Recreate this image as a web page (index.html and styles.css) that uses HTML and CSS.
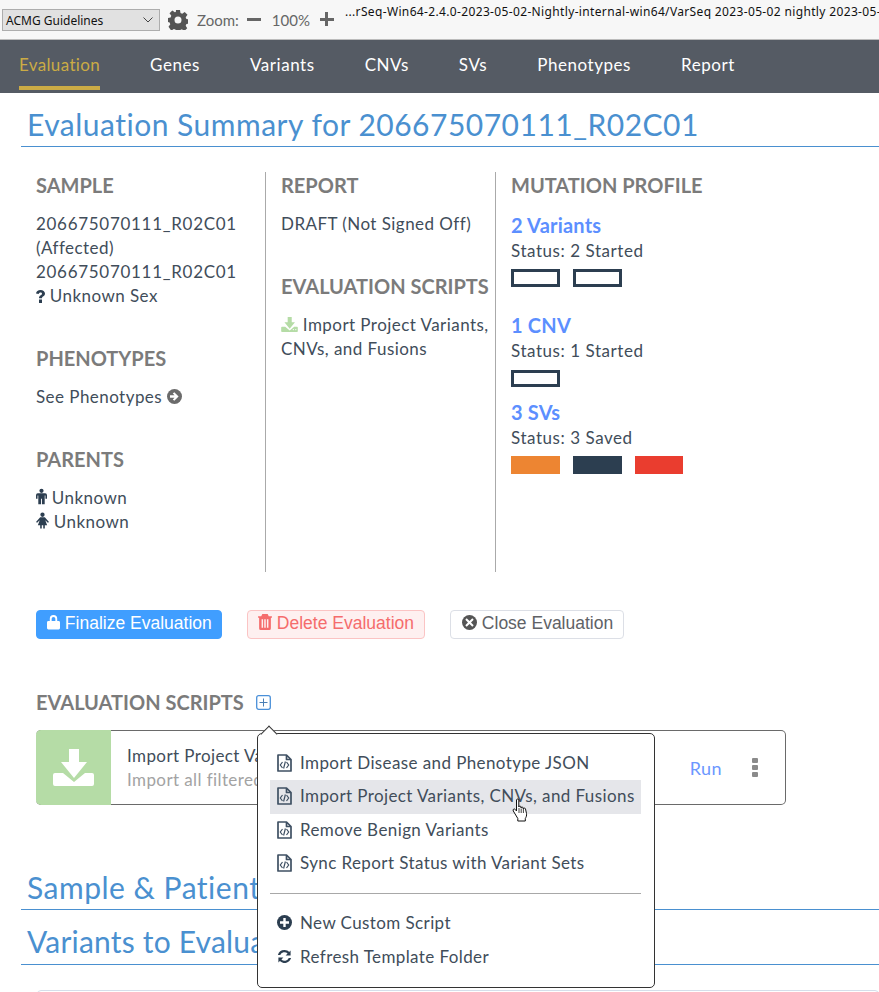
FILE: index.html
```html
<!DOCTYPE html>
<html lang="en">
<head>
<meta charset="utf-8">
<title>Evaluation Summary</title>
<link rel="stylesheet" href="styles.css">
</head>
<body>
<svg class="sprites" width="0" height="0" aria-hidden="true">
  <symbol id="file-code" viewBox="0 0 15 18">
    <path d="M1 1h8.500L14 5.500V17H1z M9.500 1v4.500H14" fill="none" stroke="currentColor" stroke-width="1.700" stroke-linejoin="round"/>
    <path d="M5.500 8 3.300 11l2.200 3M9.500 8l2.200 3-2.200 3M8.400 7.500 6.600 14.500" fill="none" stroke="currentColor" stroke-width="1.200"/>
  </symbol>
  <symbol id="download" viewBox="0 0 41 37">
    <path d="M16 0h10v13h8L21 29 8 13h8z" fill="currentColor"/>
    <path d="M0 26a2 2 0 0 1 2-2h8l11 9 11-9h7a2 2 0 0 1 2 2v9a2 2 0 0 1-2 2H2a2 2 0 0 1-2-2z" fill="currentColor"/>
    <circle cx="30" cy="31" r="1.500" class="dl-dot"/><circle cx="36" cy="31" r="1.500" class="dl-dot"/>
  </symbol>
</svg>

<header class="toolbar">
  <div class="select"><span>ACMG Guidelines</span>
    <svg class="chevron" width="10" height="6" viewBox="0 0 10 6"><path d="M.5.500 5 5 9.500.500" fill="none" stroke="#444" stroke-width="1"/></svg>
  </div>
  <svg class="gear" width="20" height="20" viewBox="0 0 20 20">
    <path fill="#555" fill-rule="evenodd" d="M8 0h4l.5 3 1.700.7L16.700 2l2.800 2.800-1.800 2.500.7 1.700 2.600.5v4l-2.600.5-.7 1.700 1.500 2.500-2.800 2.800-2.500-1.700-1.700.7-.5 2.500H8l-.5-2.900-1.700-.7-2.500 1.800L.5 16.700l1.800-2.500-.7-1.700L0 12V8l2.600-.5.700-1.700L1.500 3.300 4.300.5 6.800 2.300l1-.4zM10 6.500a3.500 3.500 0 1 0 0 7 3.500 3.500 0 0 0 0-7z"/>
  </svg>
  <span class="zoom-label">Zoom:</span>
  <span class="zoom-btn minus"></span>
  <span class="zoom-value">100%</span>
  <span class="zoom-btn plus"></span>
  <span class="path">...rSeq-Win64-2.4.0-2023-05-02-Nightly-internal-win64/VarSeq 2023-05-02 nightly 2023-05-0</span>
</header>

<nav class="nav">
  <a class="nav-item active">Evaluation</a>
  <a class="nav-item">Genes</a>
  <a class="nav-item">Variants</a>
  <a class="nav-item">CNVs</a>
  <a class="nav-item">SVs</a>
  <a class="nav-item">Phenotypes</a>
  <a class="nav-item">Report</a>
</nav>

<main class="main">
  <h1 class="page-title first">Evaluation Summary for 206675070111_R02C01</h1>

  <section class="summary">
    <div class="col col-a">
      <h3 class="label">SAMPLE</h3>
      <p class="text"><span class="id">206675070111_R02C01</span><br>(Affected)<br><span class="id">206675070111_R02C01</span><br>
        <svg class="ico" width="9" height="13" viewBox="0 0 9 13"><path fill="#2c3e50" d="M0 3.500C.3 1.300 2 0 4.500 0 7 0 9 1.500 9 3.600c0 2.900-3 2.700-3 4.700H3c0-3.300 3-3 3-4.600 0-.800-.7-1.200-1.500-1.200-.9 0-1.500.5-1.800 1.500zM3 9.500h3V13H3z"/></svg> Unknown Sex</p>
      <h3 class="label next">PHENOTYPES</h3>
      <p class="text">See Phenotypes
        <svg class="ico" width="15" height="15" viewBox="0 0 15 15"><circle cx="7.500" cy="7.500" r="7.500" fill="#6b6b6b"/><path d="M3 6.300h4.500L5.800 4.600 7.300 3.200l4.300 4.300-4.300 4.300-1.500-1.400 1.700-1.700H3z" fill="#fff"/></svg></p>
      <h3 class="label next">PARENTS</h3>
      <p class="text">
        <svg class="ico" width="11" height="17" viewBox="0 0 12 17"><circle cx="6" cy="2.300" r="2.300" fill="#2c3e50"/><path fill="#2c3e50" d="M2 5h8a2 2 0 0 1 2 2v4h-1.700V7.500H9.500V17H6.500v-6h-1v6H2.500V7.500h-.8V11H0V7a2 2 0 0 1 2-2z"/></svg> Unknown<br>
        <svg class="ico" width="13" height="17" viewBox="0 0 14 17"><circle cx="7" cy="2.300" r="2.300" fill="#2c3e50"/><path fill="#2c3e50" d="M4.500 5h5L14 10l-1.200 1L10 8.200l2 5.300H9.500V17h-1.700v-3.500H6.200V17H4.500v-3.500H2l2-5.300L1.200 11 0 10z"/></svg> Unknown</p>
    </div>
    <div class="col col-b">
      <h3 class="label">REPORT</h3>
      <p class="text">DRAFT (Not Signed Off)</p>
      <h3 class="label next">EVALUATION SCRIPTS</h3>
      <p class="text"><svg class="ico dl-small" width="17" height="15"><use href="#download"/></svg> Import Project Variants, CNVs, and Fusions</p>
    </div>
    <div class="col col-c">
      <h3 class="label">MUTATION PROFILE</h3>
      <a class="count top">2 Variants</a>
      <p class="text status">Status: 2 Started</p>
      <div class="bars first"><i class="bar open"></i><i class="bar open"></i></div>
      <a class="count gap-lg">1 CNV</a>
      <p class="text status">Status: 1 Started</p>
      <div class="bars short"><i class="bar open"></i></div>
      <a class="count gap-sm">3 SVs</a>
      <p class="text status">Status: 3 Saved</p>
      <div class="bars sv"><i class="bar orange"></i><i class="bar navy"></i><i class="bar red"></i></div>
    </div>
  </section>

  <div class="actions">
    <button class="btn primary">
      <svg class="ico" width="13" height="16" viewBox="0 0 14 16"><path fill="#fff" fill-rule="evenodd" d="M3 7V4.500a4 4 0 0 1 8 0V7h1.500a1.500 1.500 0 0 1 1.500 1.500v6a1.500 1.500 0 0 1-1.500 1.500h-11A1.500 1.500 0 0 1 0 14.500v-6A1.500 1.500 0 0 1 1.500 7zm2 0h4V4.500a2 2 0 0 0-4 0z"/></svg>
      Finalize Evaluation</button>
    <button class="btn danger">
      <svg class="ico" width="14" height="16" viewBox="0 0 13 15"><path fill="#f56c6c" fill-rule="evenodd" d="M4 0h5l1 2h3v1.500h-1V13.500A1.500 1.500 0 0 1 10.500 15h-8A1.500 1.500 0 0 1 1 13.500V3.500H0V2h3zM3.300 5v8h1.400V5zm2.500 0v8h1.400V5zm2.500 0v8h1.400V5z"/></svg>
      Delete Evaluation</button>
    <button class="btn plain">
      <svg class="ico" width="15" height="15" viewBox="0 0 15 15"><circle cx="7.500" cy="7.500" r="7.500" fill="#555"/><path d="M4.700 3.300 7.500 6l2.800-2.700 1.400 1.400L9 7.500l2.700 2.800-1.400 1.400L7.500 9l-2.800 2.700-1.400-1.400L6 7.500 3.300 4.700z" fill="#fff"/></svg>
      Close Evaluation</button>
  </div>

  <h3 class="label scripts-head">EVALUATION SCRIPTS
    <svg class="add" width="15" height="15" viewBox="0 0 15 15"><rect x=".7" y=".7" width="13.600" height="13.600" rx="2" fill="none" stroke="#4a90d9" stroke-width="1.300"/><path d="M7.500 3.500v8M3.500 7.500h8" stroke="#4a7fb5" stroke-width="1"/></svg>
  </h3>

  <div class="script-card">
    <div class="script-thumb"><svg class="dl-large" width="41" height="37"><use href="#download"/></svg></div>
    <div class="script-body">
      <div class="script-name">Import Project Variants</div>
      <div class="script-desc">Import all filtered</div>
    </div>
    <a class="run">Run</a>
    <div class="kebab"><i></i><i></i><i></i></div>
  </div>

  <h1 class="page-title sample">Sample &amp; Patient Information</h1>
  <h1 class="page-title last">Variants to Evaluate</h1>
  <div class="next-card"></div>
</main>

<div class="menu">
  <div class="menu-item"><svg class="menu-ico file"><use href="#file-code"/></svg>Import Disease and Phenotype JSON</div>
  <div class="menu-item hover"><svg class="menu-ico file"><use href="#file-code"/></svg>Import Project Variants, CNVs, and Fusions</div>
  <div class="menu-item"><svg class="menu-ico file"><use href="#file-code"/></svg>Remove Benign Variants</div>
  <div class="menu-item"><svg class="menu-ico file"><use href="#file-code"/></svg>Sync Report Status with Variant Sets</div>
  <hr class="menu-sep">
  <div class="menu-item"><svg class="menu-ico" viewBox="0 0 15 15"><circle cx="7.500" cy="7.500" r="7.500" fill="#2c3e50"/><path d="M6.300 3h2.400v3.300H12v2.400H8.700V12H6.300V8.700H3V6.300h3.300z" fill="#fff"/></svg>New Custom Script</div>
  <div class="menu-item"><svg class="menu-ico" viewBox="0 0 15 15"><path fill="#2c3e50" d="M7.600 1c1.800 0 3.400.7 4.500 1.900L13.600 1.500V6.500H8.600l2-2A4.500 4.500 0 0 0 3.200 6H.9A6.800 6.800 0 0 1 7.600 1zM1.400 8.500h5l-2 2A4.500 4.500 0 0 0 11.800 9h2.300a6.800 6.800 0 0 1-11.200 3.100L1.400 13.500z"/></svg>Refresh Template Folder</div>
</div>

<svg class="cursor" width="17" height="25" viewBox="0 0 17 25">
  <path d="M4.500 2c0-1.300 2.300-1.300 2.300 0v7c0-1.200 2.200-1.200 2.200 0v1c0-1.200 2.200-1.200 2.200 0v1c0-1.200 2.300-1.200 2.300 0l1 4.500c.4 2-.3 3.500-1.200 5v2.500H5.800v-2.500L1.300 13c-1-1.500 1-2.800 2-1.500l1.200 1.500z" fill="#fff" stroke="#111" stroke-width="1" stroke-linejoin="round"/>
  <path d="M7 10v5M9.200 10.500V15M11.400 11v4" stroke="#111" stroke-width=".8"/>
</svg>
</body>
</html>
```

FILE: styles.css
```css
* { box-sizing: border-box; }
html, body { margin: 0; padding: 0; }
body {
  position: relative;
  width: 879px;
  height: 992px;
  overflow: hidden;
  background: #fff;
  font-family: Lato, "Noto Sans", sans-serif;
  color: #414d5a;
}
.sprites { position: absolute; }
.ico { vertical-align: -1px; }

/* Toolbar */
.toolbar {
  display: flex;
  align-items: flex-start;
  height: 40px;
  padding: 9px 0 0 2px;
  background: #f7f7f7;
  border-bottom: 1px solid #bcbcbc;
  white-space: nowrap;
  overflow: hidden;
}
.toolbar > * { flex: none; }
.select {
  display: flex;
  align-items: center;
  justify-content: space-between;
  width: 158px;
  height: 22px;
  padding: 0 6px 0 3px;
  background: #e1e1e1;
  border: 1px solid #adadad;
  font: 12px "Noto Sans", sans-serif;
  color: #111;
}
.gear { margin: 1px 0 0 8px; }
.zoom-label, .zoom-value {
  font: 15px/22px Lato, sans-serif;
  color: #666;
}
.zoom-label { margin-left: 9px; }
.zoom-value { margin-left: 11px; }
.zoom-btn { position: relative; width: 14px; height: 22px; }
.zoom-btn::before, .plus::after {
  content: "";
  position: absolute;
  background: #666;
}
.zoom-btn::before { left: 0; top: 8.500px; width: 14px; height: 3px; }
.plus::after { left: 5.500px; top: 3px; width: 3px; height: 14px; }
.minus { margin-left: 8px; }
.plus { margin-left: 10px; }
.path {
  margin: -7px 0 0 11px;
  font: 12px/20px "Noto Sans", sans-serif;
  letter-spacing: .35px;
  color: #111;
}

/* Nav */
.nav {
  display: flex;
  gap: 50px;
  height: 53px;
  padding-left: 19px;
  background: #555b64;
}
.nav-item {
  height: 50px;
  font-size: 17px;
  letter-spacing: .55px;
  line-height: 50px;
  color: #fff;
}
.nav-item.active {
  letter-spacing: .35px;
  color: #cbab45;
  border-bottom: 4px solid #cbab45;
}

/* Main */
.main { padding-left: 21px; }
.page-title {
  margin: 0;
  height: 55px;
  padding: 13px 0 0 6px;
  border-bottom: 1px solid #4a90d0;
  font-size: 30px;
  font-weight: 400;
  letter-spacing: .5px;
  line-height: 38px;
  color: #4a90d0;
  white-space: nowrap;
  overflow: hidden;
}
.page-title.first { height: 54px; padding-top: 12px; }
.page-title.sample { margin-top: 50px; }
.page-title.last { padding-top: 12px; letter-spacing: .2px; }

.summary {
  display: flex;
  height: 400px;
  margin-top: 25px;
}
.col { padding: 1px 0 0 15px; }
.col-a { width: 244px; }
.col-b { width: 230px; border-left: 1px solid #aaa; }
.col-c { flex: 1; border-left: 1px solid #aaa; }

.label {
  margin: 0;
  font-size: 20px;
  font-weight: 700;
  line-height: 24px;
  color: #7b7b7b;
  white-space: nowrap;
}
.label.next { margin-top: 38px; }
.text {
  margin: 15px 0 0;
  font-size: 17px;
  letter-spacing: .45px;
  line-height: 24px;
}
.id { letter-spacing: .7px; }
.count {
  display: block;
  font-size: 20px;
  font-weight: 700;
  line-height: 26px;
  letter-spacing: .2px;
  color: #5c8fff;
}
.count.top { margin-top: 15px; }
.count.gap-lg { margin-top: 25px; }
.count.gap-sm { margin-top: 12px; }
.text.status { margin-top: 1px; letter-spacing: .55px; }
.bars {
  display: flex;
  gap: 13px;
  height: 18px;
  margin-top: 7px;
}
.bars.first { margin-top: 6px; }
.bars.short { height: 17px; }
.bars.sv { margin-top: 6px; }
.bar { display: block; width: 48.800px; }
.bar.open { border: 3px solid #2c3e50; }
.bar.orange { background: #ed8532; }
.bar.navy { background: #2c3e50; }
.bar.red { background: #ea3d2f; }
.dl-small { color: #b5dca6; }
.dl-dot { fill: #fff; }

/* Buttons */
.actions {
  display: flex;
  gap: 25px;
  margin: 38px 0 0 15px;
}
.btn {
  height: 29px;
  padding: 0 0 2px 10px;
  border: 1px solid;
  border-radius: 4px;
  font: 17.500px/1 "Liberation Sans", Arial, sans-serif;
  text-align: left;
  white-space: nowrap;
}
.btn.primary { width: 186px; background: #409eff; border-color: #409eff; color: #fff; }
.btn.danger { width: 178px; background: #fef0f0; border-color: #fbc4c4; color: #f56c6c; }
.btn.plain { width: 174px; padding-left: 11px; background: #fff; border-color: #dcdfe6; color: #606266; }

.scripts-head {
  display: flex;
  align-items: center;
  gap: 12px;
  margin: 51px 0 0 15px;
}

/* Script card */
.script-card {
  display: flex;
  align-items: stretch;
  width: 750px;
  height: 75px;
  margin: 16px 0 0 15px;
  border: 1px solid #6a6a6a;
  border-left: 0;
  border-radius: 5px;
}
.script-thumb {
  display: flex;
  align-items: center;
  justify-content: center;
  width: 75px;
  margin: -1px 0;
  padding-right: 1px;
  background: #b5dca6;
  border-radius: 5px 0 0 5px;
  color: #fff;
}
.dl-large .dl-dot { fill: #b5dca6; }
.script-body { flex: 1; padding: 13px 0 0 16px; font-size: 17px; letter-spacing: .4px; line-height: 24px; white-space: nowrap; }
.script-desc { color: #a3a3a3; }
.run {
  margin-right: 30px;
  align-self: center;
  font-size: 18px;
  letter-spacing: .4px;
  color: #6c97ff;
}
.kebab {
  display: flex;
  flex-direction: column;
  gap: 1.500px;
  align-self: center;
  margin-right: 27px;
}
.kebab i { display: block; width: 6px; height: 5.500px; border-radius: 1px; background: #8b8b8b; }

.next-card {
  height: 40px;
  margin: 25px 0 0 16px;
  border: 1px solid #d5deea;
  border-radius: 4px;
}

/* Popup menu */
.menu {
  position: absolute;
  left: 257px;
  top: 733px;
  width: 398px;
  height: 255px;
  padding: 13px 13px 0 12px;
  background: #fff;
  border: 1px solid #333;
  border-radius: 5px;
}
.menu::before {
  content: "";
  position: absolute;
  left: 5px;
  top: -6px;
  width: 11px;
  height: 11px;
  background: #fff;
  border: solid #333;
  border-width: 1px 0 0 1px;
  transform: rotate(45deg);
}
.menu-item {
  display: flex;
  align-items: center;
  height: 33.300px;
  padding: 0 0 2px 7px;
  font-size: 17px;
  letter-spacing: .4px;
  white-space: nowrap;
}
.menu-item.hover { background: #e5e6ea; }
.menu-ico { flex: none; width: 15px; height: 15px; margin-right: 8px; }
.menu-ico.file { height: 18px; margin-top: 1px; color: #3f5063; }
.menu-sep { height: 1px; margin: 13px 0; border: 0; background: #a8a8a8; }

.cursor { position: absolute; left: 512px; top: 798px; }
```
